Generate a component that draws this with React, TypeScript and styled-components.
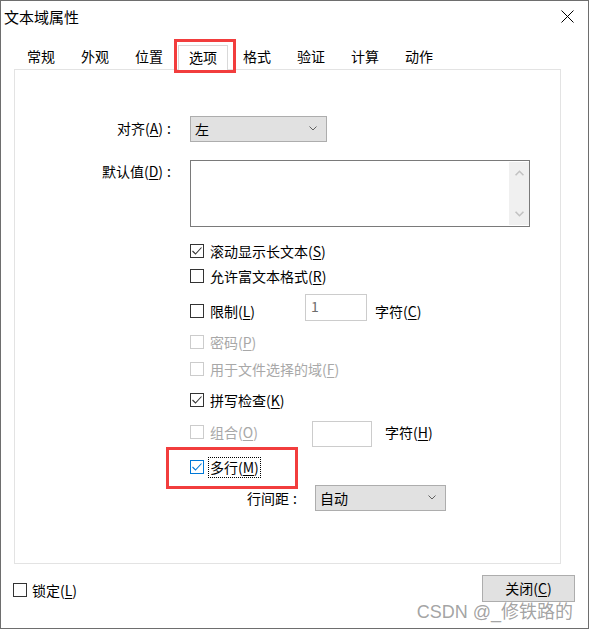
import React from "react";
import styled, { createGlobalStyle, css } from "styled-components";

const FONT = `"Noto Sans CJK SC", "Noto Sans", "DejaVu Sans", sans-serif`;

const Global = createGlobalStyle`
  html, body { margin: 0; padding: 0; background: #fff; }
  body { font-family: ${FONT}; }
`;

const Window = styled.div`
  position: relative;
  box-sizing: border-box;
  width: 589px;
  height: 629px;
  border: 1px solid #6e6e6e;
  background: #fff;
  display: flex;
  flex-direction: column;
  font-family: ${FONT};
  font-size: 14px;
  color: #000;
  overflow: hidden;
`;

const TitleBar = styled.div`
  box-sizing: border-box;
  height: 32px;
  display: flex;
  align-items: center;
  justify-content: space-between;
  padding: 0 14px 2px 3px;
`;

const Title = styled.div`
  font-size: 15px;
  line-height: 1;
`;

const CloseIcon = styled.svg`
  width: 13px;
  height: 13px;
  display: block;
  margin-top: 1px;
`;

const TabStrip = styled.div`
  margin-top: 12px;
  height: 24px;
  display: flex;
  padding-left: 13px;
  position: relative;
  z-index: 2;
`;

const Tab = styled.div<{ $active?: boolean }>`
  position: relative;
  box-sizing: border-box;
  width: 54px;
  height: 24px;
  display: flex;
  align-items: center;
  justify-content: center;
  padding-bottom: 2px;
  font-size: 14px;
  line-height: 1;
  ${(p) =>
    p.$active &&
    css`
      width: 50px;
      margin: 0 2px;
      height: 25px;
      padding-bottom: 3px;
      border: 1px solid #d9d9d9;
      border-bottom: none;
      background: #fff;
    `}
`;

const RedMark = styled.div<{ $l: number; $t: number; $w: number; $h: number }>`
  position: absolute;
  box-sizing: border-box;
  left: ${(p) => p.$l}px;
  top: ${(p) => p.$t}px;
  width: ${(p) => p.$w}px;
  height: ${(p) => p.$h}px;
  border: 3px solid #f23d3d;
  pointer-events: none;
  z-index: 3;
`;

const Panel = styled.div`
  position: relative;
  z-index: 1;
  box-sizing: border-box;
  height: 495px;
  margin: 0 27px 0 13px;
  border: 1px solid #e3e3e3;
  padding-top: 46px;
  display: flex;
  flex-direction: column;
`;

const FieldRow = styled.div<{ $mt?: number; $h: number }>`
  display: flex;
  gap: 18px;
  height: ${(p) => p.$h}px;
  margin-top: ${(p) => p.$mt ?? 0}px;
`;

const FieldLabel = styled.div<{ $top?: boolean }>`
  width: 157px;
  text-align: right;
  line-height: 20px;
  padding-top: ${(p) => (p.$top ? 1 : 2)}px;
  white-space: nowrap;
`;

const Colon = styled.span`
  margin-left: 4px;
  padding-right: 1px;
`;

const Select = styled.div<{ $w: number }>`
  box-sizing: border-box;
  width: ${(p) => p.$w}px;
  height: 26px;
  background: #e1e1e1;
  border: 1px solid #adadad;
  display: flex;
  align-items: center;
  justify-content: space-between;
  padding: 0 9px 1px 4px;
  line-height: 20px;
`;

const Chevron = styled.svg`
  width: 8px;
  height: 5px;
  display: block;
`;

const TextArea = styled.div`
  box-sizing: border-box;
  width: 340px;
  height: 67px;
  border: 1px solid #7a7a7a;
  background: #fff;
  display: flex;
  justify-content: flex-end;
  padding: 1px 0 1px 0;
`;

const ScrollBar = styled.div`
  width: 20px;
  background: #f0f0f0;
  display: flex;
  flex-direction: column;
  justify-content: space-between;
  align-items: center;
  padding: 8px 0 8px;
`;

const CheckRow = styled.div<{ $mt: number }>`
  position: relative;
  margin-left: 175px;
  margin-top: ${(p) => p.$mt}px;
  height: 20px;
  display: flex;
  align-items: center;
`;

const CheckItem = styled.div<{ $w?: number; $disabled?: boolean }>`
  display: flex;
  align-items: center;
  gap: 6px;
  width: ${(p) => (p.$w ? `${p.$w}px` : "auto")};
  flex: none;
  line-height: 20px;
  white-space: nowrap;
  color: ${(p) => (p.$disabled ? "#a8a8a8" : "#000")};
`;

type BoxState = "off" | "on" | "disabled" | "focus";

const Box = styled.span<{ $state: BoxState }>`
  box-sizing: border-box;
  width: 14px;
  height: 14px;
  flex: none;
  background: #fff;
  display: flex;
  align-items: center;
  justify-content: center;
  border: 1px solid
    ${(p) =>
      p.$state === "disabled" ? "#cccccc" : p.$state === "focus" ? "#0078d7" : "#333333"};
`;

const CheckSvg = styled.svg`
  width: 12px;
  height: 12px;
  display: block;
`;

const FocusText = styled.span`
  border: 1px dotted #000;
  padding: 0 1px;
  margin-left: -2px;
  line-height: 19px;
`;

const SmallInput = styled.div<{ $w: number; $h: number; $mt: number }>`
  box-sizing: border-box;
  width: ${(p) => p.$w}px;
  height: ${(p) => p.$h}px;
  align-self: flex-start;
  margin-top: ${(p) => p.$mt}px;
  border: 1px solid #cccccc;
  background: #fff;
  color: #6d6d6d;
  padding: 1px 5px;
  line-height: 20px;
  flex: none;
`;

const Unit = styled.span<{ $ml: number }>`
  margin-left: ${(p) => p.$ml}px;
  line-height: 20px;
  white-space: nowrap;
`;

const SpacingRow = styled.div`
  margin-left: 232px;
  margin-top: 8px;
  height: 26px;
  display: flex;
  align-items: center;
  gap: 17px;
`;

const SpacingLabel = styled.span`
  line-height: 20px;
  white-space: nowrap;
`;

const Footer = styled.div`
  flex: 1;
  display: flex;
  justify-content: space-between;
  align-items: flex-start;
  padding: 11px 13px 0 12px;
`;

const LockItem = styled(CheckItem)`
  margin-top: 5px;
  gap: 5px;
`;

const Button = styled.div`
  box-sizing: border-box;
  width: 93px;
  height: 27px;
  background: #e1e1e1;
  border: 1px solid #adadad;
  display: flex;
  align-items: center;
  justify-content: center;
  padding-bottom: 1px;
  line-height: 20px;
`;

const Watermark = styled.div`
  position: absolute;
  right: 15px;
  bottom: 6px;
  font-size: 18px;
  line-height: 20px;
  color: rgba(140, 140, 140, 0.8);
  white-space: nowrap;
  font-family: "Liberation Sans", "Noto Sans CJK SC", sans-serif;
`;

const Key = styled.u`
  text-decoration-thickness: 1px;
  text-underline-offset: 2px;
`;

const Check: React.FC<{ state: BoxState; checked?: boolean }> = ({ state, checked }) => (
  <Box $state={state}>
    {checked && (
      <CheckSvg viewBox="0 0 12 12">
        <polyline
          points="1.5,6 4.5,9 10.5,2.5"
          fill="none"
          stroke={state === "focus" ? "#0078d7" : "#333"}
          strokeWidth="1.1"
        />
      </CheckSvg>
    )}
  </Box>
);

const DownChevron: React.FC<{ color?: string }> = ({ color = "#606060" }) => (
  <Chevron viewBox="0 0 8 5">
    <polyline points="0.5,0.5 4,4 7.5,0.5" fill="none" stroke={color} strokeWidth="1" />
  </Chevron>
);

const ScrollArrow: React.FC<{ up?: boolean }> = ({ up }) => (
  <Chevron viewBox="0 0 8 5" style={{ width: 9, height: 6 }}>
    <polyline
      points={up ? "0.5,4.5 4,1 7.5,4.5" : "0.5,0.5 4,4 7.5,0.5"}
      fill="none"
      stroke="#c2c2c2"
      strokeWidth="1.4"
    />
  </Chevron>
);

const tabs = ["常规", "外观", "位置", "选项", "格式", "验证", "计算", "动作"];

export default function App() {
  return (
    <>
      <Global />
      <Window>
        <TitleBar>
          <Title>文本域属性</Title>
          <CloseIcon viewBox="0 0 13 13">
            <line x1="0.5" y1="0.5" x2="12.5" y2="12.5" stroke="#000" strokeWidth="1" />
            <line x1="12.5" y1="0.5" x2="0.5" y2="12.5" stroke="#000" strokeWidth="1" />
          </CloseIcon>
        </TitleBar>

        <TabStrip>
          {tabs.map((t) => (
            <Tab key={t} $active={t === "选项"}>
              {t}
              {t === "选项" && <RedMark $l={-5} $t={-7} $w={62} $h={34} />}
            </Tab>
          ))}
        </TabStrip>

        <Panel>
          <FieldRow $h={26}>
            <FieldLabel>
              对齐(<Key>A</Key>)<Colon>:</Colon>
            </FieldLabel>
            <Select $w={137}>
              <span>左</span>
              <DownChevron />
            </Select>
          </FieldRow>

          <FieldRow $h={67} $mt={18}>
            <FieldLabel $top>
              默认值(<Key>D</Key>)<Colon>:</Colon>
            </FieldLabel>
            <TextArea>
              <ScrollBar>
                <ScrollArrow up />
                <ScrollArrow />
              </ScrollBar>
            </TextArea>
          </FieldRow>

          <CheckRow $mt={14}>
            <CheckItem>
              <Check state="on" checked />
              <span>
                滚动显示长文本(<Key>S</Key>)
              </span>
            </CheckItem>
          </CheckRow>

          <CheckRow $mt={5}>
            <CheckItem>
              <Check state="off" />
              <span>
                允许富文本格式(<Key>R</Key>)
              </span>
            </CheckItem>
          </CheckRow>

          <CheckRow $mt={15}>
            <CheckItem $w={115}>
              <Check state="off" />
              <span>
                限制(<Key>L</Key>)
              </span>
            </CheckItem>
            <SmallInput $w={62} $h={27} $mt={-7}>
              1
            </SmallInput>
            <Unit $ml={8}>
              字符(<Key>C</Key>)
            </Unit>
          </CheckRow>

          <CheckRow $mt={11}>
            <CheckItem $disabled>
              <Check state="disabled" />
              <span>
                密码(<Key>P</Key>)
              </span>
            </CheckItem>
          </CheckRow>

          <CheckRow $mt={7}>
            <CheckItem $disabled>
              <Check state="disabled" />
              <span>
                用于文件选择的域(<Key>F</Key>)
              </span>
            </CheckItem>
          </CheckRow>

          <CheckRow $mt={11}>
            <CheckItem>
              <Check state="on" checked />
              <span>
                拼写检查(<Key>K</Key>)
              </span>
            </CheckItem>
          </CheckRow>

          <CheckRow $mt={12}>
            <CheckItem $w={122} $disabled>
              <Check state="disabled" />
              <span>
                组合(<Key>O</Key>)
              </span>
            </CheckItem>
            <SmallInput $w={60} $h={26} $mt={-1} />
            <Unit $ml={13}>
              字符(<Key>H</Key>)
            </Unit>
          </CheckRow>

          <CheckRow $mt={15}>
            <CheckItem>
              <Check state="focus" checked />
              <FocusText>
                多行(<Key>M</Key>)
              </FocusText>
            </CheckItem>
            <RedMark $l={-24} $t={-10} $w={132} $h={42} />
          </CheckRow>

          <SpacingRow>
            <SpacingLabel>
              行间距<Colon>:</Colon>
            </SpacingLabel>
            <Select $w={131}>
              <span>自动</span>
              <DownChevron />
            </Select>
          </SpacingRow>
        </Panel>

        <Footer>
          <LockItem>
            <Check state="off" />
            <span>
              锁定(<Key>L</Key>)
            </span>
          </LockItem>
          <Button>
            <span>
              关闭(<Key>C</Key>)
            </span>
          </Button>
        </Footer>

        <Watermark>CSDN @_修铁路的</Watermark>
      </Window>
    </>
  );
}
